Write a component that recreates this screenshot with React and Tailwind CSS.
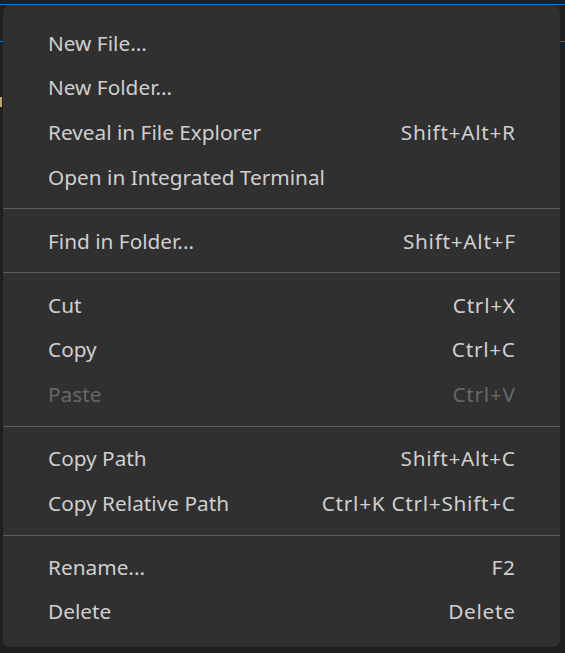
const groups = [
  [
    { label: 'New File...' },
    { label: 'New Folder...' },
    { label: 'Reveal in File Explorer', keys: 'Shift+Alt+R' },
    { label: 'Open in Integrated Terminal' },
  ],
  [{ label: 'Find in Folder...', keys: 'Shift+Alt+F' }],
  [
    { label: 'Cut', keys: 'Ctrl+X' },
    { label: 'Copy', keys: 'Ctrl+C' },
    { label: 'Paste', keys: 'Ctrl+V', disabled: true },
  ],
  [
    { label: 'Copy Path', keys: 'Shift+Alt+C' },
    { label: 'Copy Relative Path', keys: 'Ctrl+K Ctrl+Shift+C' },
  ],
  [
    { label: 'Rename...', keys: 'F2' },
    { label: 'Delete', keys: 'Delete' },
  ],
];

function MenuItem({ item }) {
  return (
    <div
      className={`h-[44.7px] flex items-center justify-between px-[45px] ${
        item.disabled ? 'text-[#676767]' : 'text-[#cfcfcf]'
      }`}
    >
      <span>{item.label}</span>
      {item.keys && <span className="tracking-[0.7px] -mr-[0.7px]">{item.keys}</span>}
    </div>
  );
}

export default function App() {
  return (
    <div
      className="relative w-[565px] h-[653px] bg-[#1f1f1f] overflow-hidden pt-[5px] pl-[3px]"
      style={{ fontFamily: '"Noto Sans", "Open Sans", sans-serif' }}
    >
      {/* editor bits behind the menu */}
      <div className="absolute left-0 right-0 top-[4px] h-px bg-[#0078d4]" />
      <div className="absolute left-0 right-0 top-[41px] h-px bg-[#0078d4]" />
      <div className="absolute left-0 top-[97px] w-[2px] h-[10px] bg-[#c9a26a]" />

      <div className="relative w-[557px] h-[642px] bg-[#303030] rounded-[7px] pt-[15.6px] text-[20.8px] leading-none">
        {groups.map((group, gi) => (
          <div key={gi}>
            {gi > 0 && (
              <div className="h-[19.3px] flex items-center">
                <div className="w-full h-px bg-[#5c5c5c]" />
              </div>
            )}
            {group.map((item) => (
              <MenuItem key={item.label} item={item} />
            ))}
          </div>
        ))}
      </div>
    </div>
  );
}
